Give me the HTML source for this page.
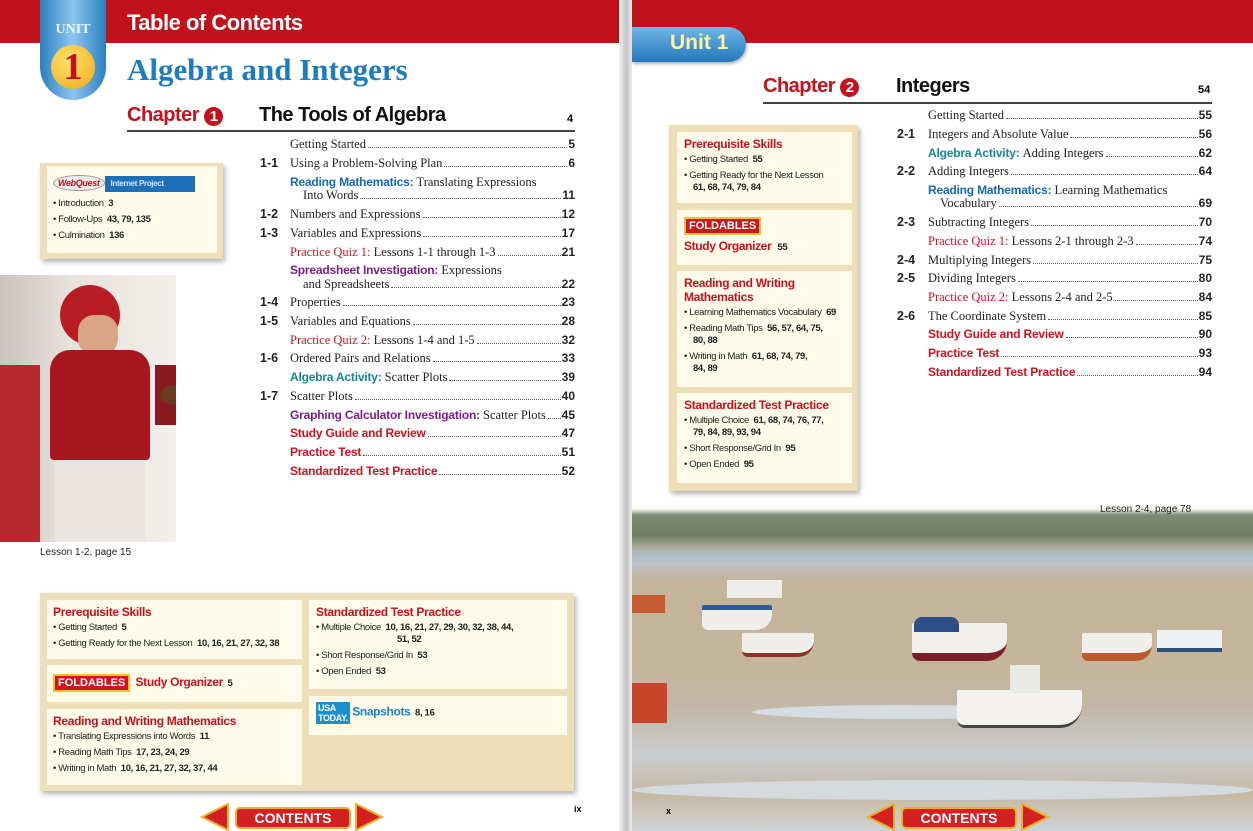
<!DOCTYPE html>
<html><head><meta charset="utf-8"><style>
*{margin:0;padding:0;box-sizing:border-box}
body{width:1253px;height:831px;position:relative;overflow:hidden;background:#fff;font-family:"Liberation Sans",sans-serif}
.a{position:absolute}
.red{background:#c1121c}
.row{position:absolute;display:flex;align-items:flex-end;font-family:"Liberation Serif",serif;font-size:12.5px;color:#222;line-height:14px;white-space:nowrap}
.row .l{flex:1;border-bottom:1px dotted #555;margin:0 1px 3px 2px}
.row .p{font-family:"Liberation Sans",sans-serif;font-weight:bold;font-size:12px}
.num{position:absolute;font-weight:bold;font-size:12.5px;color:#222}
.bl{color:#1569b3;font-family:"Liberation Sans",sans-serif;font-weight:bold;font-size:12px;letter-spacing:-.2px}
.tl{color:#11889a;font-family:"Liberation Sans",sans-serif;font-weight:bold;font-size:12px;letter-spacing:-.2px}
.rd{color:#d0121e;font-family:"Liberation Sans",sans-serif;font-weight:bold;font-size:12px;letter-spacing:-.2px}
.rq{color:#d0121e}
.pu{color:#7a1f8a;font-family:"Liberation Sans",sans-serif;font-weight:bold;font-size:12px;letter-spacing:-.2px}
.tan{position:absolute;background:#efdfb8;box-shadow:2px 3px 5px rgba(0,0,0,.3)}
.cr{position:absolute;background:#fffbea}
.sb{font-family:"Liberation Sans",sans-serif;font-size:9.5px;letter-spacing:-.35px;color:#222;line-height:12px;white-space:nowrap}
.sb h4{color:#c8101c;font-size:12px;letter-spacing:-.3px;font-weight:bold;line-height:14px;margin-bottom:3px}
.sb div{margin-bottom:4px;padding-left:9px;text-indent:-9px}
.sb b{font-size:9.5px}
.fold{display:inline-block;background:#d3141c;color:#fff;border:2px solid #f2c12e;font-weight:bold;font-size:11px;padding:0 3px;line-height:14px;letter-spacing:0}
.circ{display:inline-block;width:19px;height:19px;border-radius:50%;background:#c8101c;color:#fff;font-size:15px;text-align:center;line-height:19px;font-weight:bold}
</style></head><body>
<!-- left page -->
<div class="a red" style="left:0;top:0;width:619px;height:43px"></div>
<div class="a" style="left:40px;top:0;width:66px;height:100px;border-radius:0 0 33px 33px;background:linear-gradient(90deg,#2b7fc0,#8cc6ee 50%,#2b7fc0)"></div>
<div class="a" style="left:44px;top:22px;width:58px;text-align:center;color:#eaf4ff;font-family:'Liberation Serif',serif;font-weight:bold;font-size:14px">UNIT</div>
<div class="a" style="left:51px;top:45px;width:44px;height:44px;border-radius:50%;background:radial-gradient(circle at 40% 35%,#ffe36a,#f0a81a);text-align:center;color:#c8101c;font-family:'Liberation Serif',serif;font-weight:bold;font-size:38px;line-height:44px">1</div>
<div class="a" style="left:127px;top:10px;color:#fff;font-weight:bold;font-size:22px;letter-spacing:-.5px">Table of Contents</div>
<div class="a" style="left:127px;top:52px;color:#1b7cc4;font-family:'Liberation Serif',serif;font-weight:bold;font-size:31px">Algebra and Integers</div>
<div class="a" style="left:127px;top:104px;color:#c8101c;font-weight:bold;font-size:20px;letter-spacing:-.5px">Chapter <span class="circ">1</span></div>
<div class="a" style="left:259px;top:104px;color:#111;font-weight:bold;font-size:20px;letter-spacing:-.5px">The Tools of Algebra</div>
<div class="a" style="left:567px;top:113px;font-weight:bold;font-size:11px">4</div>
<div class="a" style="left:127px;top:130px;width:448px;height:2px;background:#444"></div>

<div class="row" style="left:290px;top:137px;width:285px">Getting Started<span class="l"></span><span class="p">5</span></div>
<div class="num" style="left:260px;top:156px">1-1</div><div class="row" style="left:290px;top:156px;width:285px">Using a Problem-Solving Plan<span class="l"></span><span class="p">6</span></div>
<div class="row" style="left:290px;top:175px;width:285px"><span class="bl">Reading Mathematics:</span>&nbsp;Translating Expressions</div>
<div class="row" style="left:303px;top:188px;width:272px">Into Words<span class="l"></span><span class="p">11</span></div>
<div class="num" style="left:260px;top:207px">1-2</div><div class="row" style="left:290px;top:207px;width:285px">Numbers and Expressions<span class="l"></span><span class="p">12</span></div>
<div class="num" style="left:260px;top:226px">1-3</div><div class="row" style="left:290px;top:226px;width:285px">Variables and Expressions<span class="l"></span><span class="p">17</span></div>
<div class="row" style="left:290px;top:245px;width:285px"><span class="rq">Practice Quiz 1:</span>&nbsp;Lessons 1-1 through 1-3<span class="l"></span><span class="p">21</span></div>
<div class="row" style="left:290px;top:263px;width:285px"><span class="pu">Spreadsheet Investigation:</span>&nbsp;Expressions</div>
<div class="row" style="left:303px;top:277px;width:272px">and Spreadsheets<span class="l"></span><span class="p">22</span></div>
<div class="num" style="left:260px;top:295px">1-4</div><div class="row" style="left:290px;top:295px;width:285px">Properties<span class="l"></span><span class="p">23</span></div>
<div class="num" style="left:260px;top:314px">1-5</div><div class="row" style="left:290px;top:314px;width:285px">Variables and Equations<span class="l"></span><span class="p">28</span></div>
<div class="row" style="left:290px;top:333px;width:285px"><span class="rq">Practice Quiz 2:</span>&nbsp;Lessons 1-4 and 1-5<span class="l"></span><span class="p">32</span></div>
<div class="num" style="left:260px;top:351px">1-6</div><div class="row" style="left:290px;top:351px;width:285px">Ordered Pairs and Relations<span class="l"></span><span class="p">33</span></div>
<div class="row" style="left:290px;top:370px;width:285px"><span class="tl">Algebra Activity:</span>&nbsp;Scatter Plots<span class="l"></span><span class="p">39</span></div>
<div class="num" style="left:260px;top:389px">1-7</div><div class="row" style="left:290px;top:389px;width:285px">Scatter Plots<span class="l"></span><span class="p">40</span></div>
<div class="row" style="left:290px;top:408px;width:285px"><span class="pu">Graphing Calculator Investigation:</span>&nbsp;Scatter Plots<span class="l"></span><span class="p">45</span></div>
<div class="row" style="left:290px;top:426px;width:285px"><span class="rd">Study Guide and Review</span><span class="l"></span><span class="p">47</span></div>
<div class="row" style="left:290px;top:445px;width:285px"><span class="rd">Practice Test</span><span class="l"></span><span class="p">51</span></div>
<div class="row" style="left:290px;top:464px;width:285px"><span class="rd">Standardized Test Practice</span><span class="l"></span><span class="p">52</span></div>

<div class="tan" style="left:40px;top:163px;width:183px;height:96px"></div>
<div class="cr sb" style="left:47px;top:166px;width:170px;height:87px;padding:9px 6px">
<div style="padding:0;text-indent:0;margin-bottom:6px"><span style="display:inline-block;background:#eee;border-radius:50%;color:#c8101c;font-style:italic;font-weight:bold;font-size:9px;padding:1px 4px;border:1px solid #999">WebQuest</span><span style="display:inline-block;background:#1f6fb8;color:#cfe6ff;font-weight:bold;font-size:8px;padding:2px 6px;width:90px">Internet Project</span></div>
<div>• Introduction&nbsp; <b>3</b></div><div>• Follow-Ups&nbsp; <b>43, 79, 135</b></div><div>• Culmination&nbsp; <b>136</b></div></div>

<!-- player photo -->
<div class="a" style="left:0;top:275px;width:176px;height:267px;background:linear-gradient(90deg,#c9c3bd,#e8e2dc 40%,#f3efea);overflow:hidden">
<div class="a" style="left:0;top:90px;width:40px;height:177px;background:#b8282c"></div>
<div class="a" style="left:60px;top:10px;width:60px;height:60px;border-radius:50%;background:#b81d24"></div>
<div class="a" style="left:78px;top:40px;width:40px;height:40px;border-radius:40%;background:#d9a585"></div>
<div class="a" style="left:50px;top:75px;width:100px;height:110px;border-radius:20px 20px 4px 4px;background:#a8161f"></div>
<div class="a" style="left:155px;top:90px;width:22px;height:60px;background:#8a1a1f"></div>
<div class="a" style="left:160px;top:110px;width:30px;height:20px;border-radius:50%;background:#6b3a22"></div>
<div class="a" style="left:55px;top:185px;width:90px;height:82px;background:#e9e4df"></div>
</div>
<div class="a" style="left:40px;top:547px;font-size:10px;color:#222">Lesson 1-2, page 15</div>

<div class="tan" style="left:40px;top:593px;width:534px;height:198px"></div>
<div class="cr sb" style="left:47px;top:600px;width:255px;height:59px;padding:5px 6px"><h4>Prerequisite Skills</h4><div>• Getting Started&nbsp; <b>5</b></div><div>• Getting Ready for the Next Lesson&nbsp; <b>10, 16, 21, 27, 32, 38</b></div></div>
<div class="cr sb" style="left:47px;top:665px;width:255px;height:37px;padding:9px 6px"><span class="fold">FOLDABLES</span> <span style="color:#c8101c;font-weight:bold;font-size:12px">&nbsp;Study Organizer</span>&nbsp; <b>5</b></div>
<div class="cr sb" style="left:47px;top:709px;width:255px;height:76px;padding:5px 6px"><h4>Reading and Writing Mathematics</h4><div>• Translating Expressions into Words&nbsp; <b>11</b></div><div>• Reading Math Tips&nbsp; <b>17, 23, 24, 29</b></div><div>• Writing in Math&nbsp; <b>10, 16, 21, 27, 32, 37, 44</b></div></div>
<div class="cr sb" style="left:309px;top:600px;width:258px;height:89px;padding:5px 7px"><h4>Standardized Test Practice</h4><div>• Multiple Choice&nbsp; <b>10, 16, 21, 27, 29, 30, 32, 38, 44,</b><br><b style="margin-left:72px">51, 52</b></div><div>• Short Response/Grid In&nbsp; <b>53</b></div><div>• Open Ended&nbsp; <b>53</b></div></div>
<div class="cr sb" style="left:309px;top:696px;width:258px;height:39px;padding:6px 7px"><span style="display:inline-block;background:#1a8fd0;color:#fff;font-weight:bold;font-size:9px;line-height:10px;padding:1px 2px;vertical-align:middle">USA<br>TODAY.</span> <span style="color:#1a7fc4;font-weight:bold;font-size:12px">Snapshots</span>&nbsp; <b>8, 16</b></div>

<svg class="a" style="left:200px;top:802px" width="185" height="29"><polygon points="2,15 28,2 28,28" fill="#d42020" stroke="#e8b22a" stroke-width="2"/><rect x="36" y="6" width="114" height="20" rx="4" fill="#d42020" stroke="#e8b22a" stroke-width="2"/><text x="93" y="21" text-anchor="middle" fill="#fff" font-family="Liberation Sans" font-weight="bold" font-size="14">CONTENTS</text><polygon points="182,15 156,2 156,28" fill="#d42020" stroke="#e8b22a" stroke-width="2"/></svg>
<div class="a" style="left:574px;top:804px;font-size:9px;font-weight:bold">ix</div>

<!-- divider -->
<div class="a" style="left:619px;top:0;width:13px;height:831px;background:linear-gradient(90deg,#f4f4f4,#d0d0d0 40%,#c4c4c4 60%,#eeeeee)"></div>

<!-- right page -->
<div class="a red" style="left:632px;top:0;width:621px;height:43px"></div>
<div class="a" style="left:632px;top:27px;width:114px;height:35px;border-radius:0 18px 18px 0;background:linear-gradient(180deg,#6db6e6,#2578bd);box-shadow:1px 2px 3px rgba(0,0,0,.3)"></div>
<div class="a" style="left:670px;top:31px;color:#fff29a;font-weight:bold;font-size:21px">Unit 1</div>
<div class="a" style="left:763px;top:75px;color:#c8101c;font-weight:bold;font-size:20px;letter-spacing:-.5px">Chapter <span class="circ">2</span></div>
<div class="a" style="left:896px;top:75px;color:#111;font-weight:bold;font-size:20px;letter-spacing:-.5px">Integers</div>
<div class="a" style="left:1198px;top:84px;font-weight:bold;font-size:11px">54</div>
<div class="a" style="left:763px;top:102px;width:449px;height:2px;background:#444"></div>

<div class="row" style="left:928px;top:108px;width:284px">Getting Started<span class="l"></span><span class="p">55</span></div>
<div class="num" style="left:897px;top:127px">2-1</div><div class="row" style="left:928px;top:127px;width:284px">Integers and Absolute Value<span class="l"></span><span class="p">56</span></div>
<div class="row" style="left:928px;top:146px;width:284px"><span class="tl">Algebra Activity:</span>&nbsp;Adding Integers<span class="l"></span><span class="p">62</span></div>
<div class="num" style="left:897px;top:164px">2-2</div><div class="row" style="left:928px;top:164px;width:284px">Adding Integers<span class="l"></span><span class="p">64</span></div>
<div class="row" style="left:928px;top:183px;width:284px"><span class="bl">Reading Mathematics:</span>&nbsp;Learning Mathematics</div>
<div class="row" style="left:940px;top:196px;width:272px">Vocabulary<span class="l"></span><span class="p">69</span></div>
<div class="num" style="left:897px;top:215px">2-3</div><div class="row" style="left:928px;top:215px;width:284px">Subtracting Integers<span class="l"></span><span class="p">70</span></div>
<div class="row" style="left:928px;top:234px;width:284px"><span class="rq">Practice Quiz 1:</span>&nbsp;Lessons 2-1 through 2-3<span class="l"></span><span class="p">74</span></div>
<div class="num" style="left:897px;top:253px">2-4</div><div class="row" style="left:928px;top:253px;width:284px">Multiplying Integers<span class="l"></span><span class="p">75</span></div>
<div class="num" style="left:897px;top:271px">2-5</div><div class="row" style="left:928px;top:271px;width:284px">Dividing Integers<span class="l"></span><span class="p">80</span></div>
<div class="row" style="left:928px;top:290px;width:284px"><span class="rq">Practice Quiz 2:</span>&nbsp;Lessons 2-4 and 2-5<span class="l"></span><span class="p">84</span></div>
<div class="num" style="left:897px;top:309px">2-6</div><div class="row" style="left:928px;top:309px;width:284px">The Coordinate System<span class="l"></span><span class="p">85</span></div>
<div class="row" style="left:928px;top:327px;width:284px"><span class="rd">Study Guide and Review</span><span class="l"></span><span class="p">90</span></div>
<div class="row" style="left:928px;top:346px;width:284px"><span class="rd">Practice Test</span><span class="l"></span><span class="p">93</span></div>
<div class="row" style="left:928px;top:365px;width:284px"><span class="rd">Standardized Test Practice</span><span class="l"></span><span class="p">94</span></div>

<div class="tan" style="left:669px;top:125px;width:189px;height:366px"></div>
<div class="cr sb" style="left:677px;top:132px;width:175px;height:71px;padding:5px 7px"><h4>Prerequisite Skills</h4><div>• Getting Started&nbsp; <b>55</b></div><div>• Getting Ready for the Next Lesson<br><b>61, 68, 74, 79, 84</b></div></div>
<div class="cr sb" style="left:677px;top:210px;width:175px;height:55px;padding:7px 7px"><span class="fold">FOLDABLES</span><div style="color:#c8101c;font-weight:bold;font-size:12px;padding:0;text-indent:0;margin-top:5px">Study Organizer&nbsp; <b style="color:#222">55</b></div></div>
<div class="cr sb" style="left:677px;top:271px;width:175px;height:116px;padding:5px 7px"><h4>Reading and Writing<br>Mathematics</h4><div>• Learning Mathematics Vocabulary&nbsp; <b>69</b></div><div>• Reading Math Tips&nbsp; <b>56, 57, 64, 75,</b><br><b>80, 88</b></div><div>• Writing in Math&nbsp; <b>61, 68, 74, 79,</b><br><b>84, 89</b></div></div>
<div class="cr sb" style="left:677px;top:393px;width:175px;height:90px;padding:5px 7px"><h4>Standardized Test Practice</h4><div>• Multiple Choice&nbsp; <b>61, 68, 74, 76, 77,</b><br><b>79, 84, 89, 93, 94</b></div><div>• Short Response/Grid In&nbsp; <b>95</b></div><div>• Open Ended&nbsp; <b>95</b></div></div>

<!-- boats photo -->
<div class="a" style="left:632px;top:505px;width:621px;height:326px;overflow:hidden;background:linear-gradient(180deg,#fdfbf8 0,#fdfbf8 4px,#7d8b70 10px,#6f7d62 30px,#a9ab98 42px,#b0b9c2 48px,#bcc3ca 58px,#c3b49b 75px,#c5b59b 160px,#c2b6a4 200px,#c9ccd0 250px,#c6b8a2 290px,#cfd3d6 326px)">
<div class="a" style="left:120px;top:200px;width:300px;height:14px;border-radius:50%;background:#d6dde2"></div>
<div class="a" style="left:0;top:275px;width:621px;height:20px;border-radius:50%;background:#d4dade"></div>
<div class="a" style="left:280px;top:118px;width:95px;height:38px;background:#f2f0ec;border-radius:2px 2px 20px 8px;border-bottom:8px solid #7a2026"></div>
<div class="a" style="left:282px;top:112px;width:45px;height:15px;background:#2b4f86;border-radius:8px 8px 0 0"></div>
<div class="a" style="left:325px;top:185px;width:125px;height:38px;background:#f3f2ee;border-radius:2px 2px 22px 8px;border-bottom:3px solid #444"></div>
<div class="a" style="left:378px;top:160px;width:30px;height:28px;background:#e9e9e6"></div>
<div class="a" style="left:70px;top:100px;width:70px;height:25px;background:#f0eeea;border-radius:2px 2px 16px 6px;border-top:5px solid #2e5b96"></div>
<div class="a" style="left:110px;top:128px;width:72px;height:24px;background:#f0eeea;border-radius:2px 2px 16px 6px;border-bottom:4px solid #8b3324"></div>
<div class="a" style="left:0;top:178px;width:35px;height:40px;background:#c9442b"></div>
<div class="a" style="left:450px;top:128px;width:70px;height:28px;background:#f0eeea;border-radius:2px 2px 16px 6px;border-bottom:8px solid #b85c2e"></div>
<div class="a" style="left:525px;top:125px;width:65px;height:22px;background:#eef0f2;border-bottom:4px solid #2e4f7a"></div>
<div class="a" style="left:0;top:90px;width:33px;height:18px;background:#c75b33"></div>
<div class="a" style="left:95px;top:75px;width:55px;height:18px;background:#eeece8"></div>
</div>
<div class="a" style="left:1100px;top:504px;font-size:10px;color:#222">Lesson 2-4, page 78</div>
<div class="a" style="left:666px;top:806px;font-size:9px;font-weight:bold">x</div>
<svg class="a" style="left:866px;top:802px" width="185" height="29"><polygon points="2,15 28,2 28,28" fill="#d42020" stroke="#e8b22a" stroke-width="2"/><rect x="36" y="6" width="114" height="20" rx="4" fill="#d42020" stroke="#e8b22a" stroke-width="2"/><text x="93" y="21" text-anchor="middle" fill="#fff" font-family="Liberation Sans" font-weight="bold" font-size="14">CONTENTS</text><polygon points="182,15 156,2 156,28" fill="#d42020" stroke="#e8b22a" stroke-width="2"/></svg>
</body></html>
